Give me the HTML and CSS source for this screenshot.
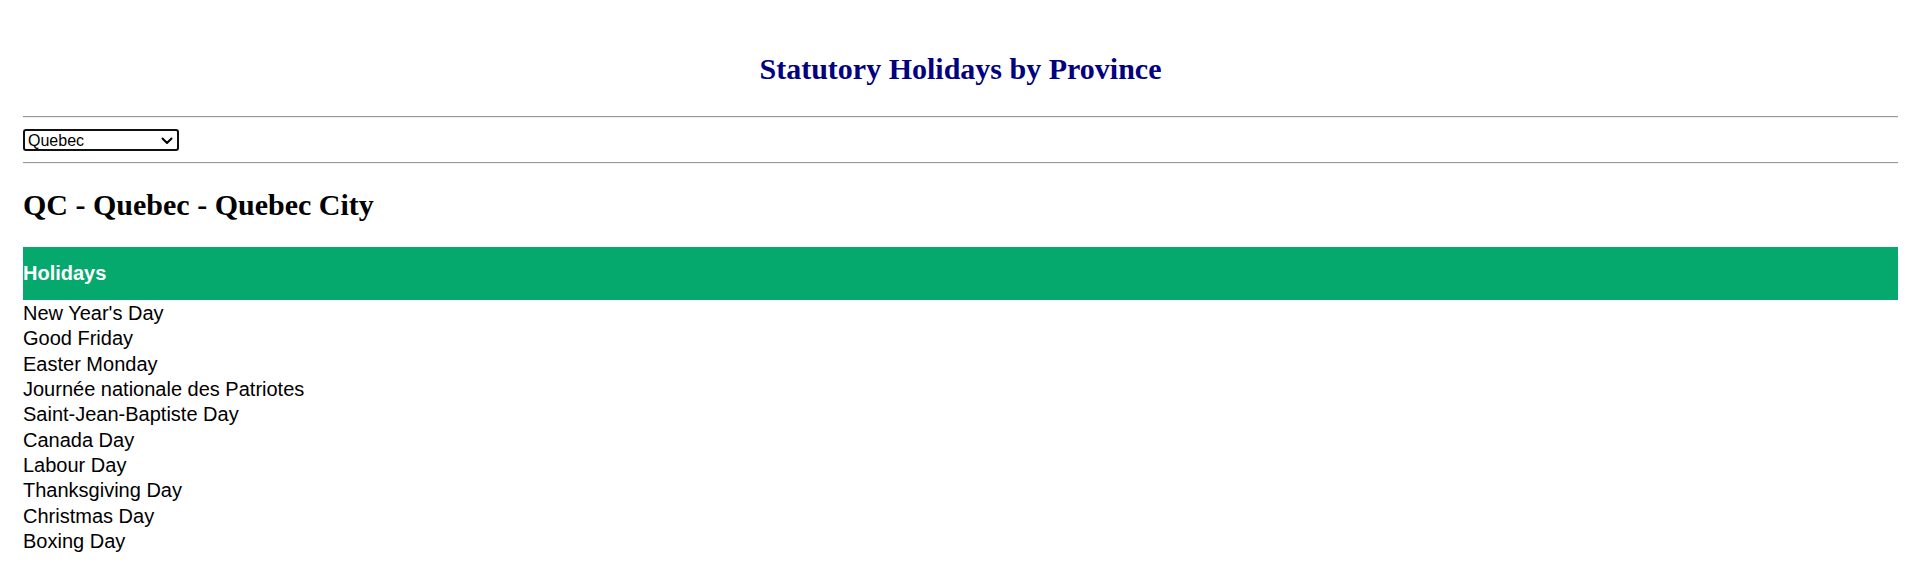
FILE: index.html
```html
<!DOCTYPE html>
<html lang="en">
<head>
<meta charset="utf-8">
<title>Statutory Holidays by Province</title>
<link rel="stylesheet" href="styles.css">
</head>
<body>
<div class="page">
  <h1 class="title">Statutory Holidays by Province</h1>
  <hr class="rule rule-top">
  <div class="picker">
    <div class="select-wrap">
      <select class="province-select">
        <option>Alberta</option>
        <option>British Columbia</option>
        <option>Manitoba</option>
        <option>New Brunswick</option>
        <option>Newfoundland and Labrador</option>
        <option>Nova Scotia</option>
        <option>Ontario</option>
        <option>Prince Edward Island</option>
        <option selected>Quebec</option>
        <option>Saskatchewan</option>
      </select>
      <svg class="chevron" width="12" height="8" viewBox="0 0 12 8" aria-hidden="true">
        <path d="M1.5 1.5 L6 6 L10.5 1.5" fill="none" stroke="#000" stroke-width="2" stroke-linecap="round" stroke-linejoin="round"/>
      </svg>
    </div>
  </div>
  <hr class="rule rule-bottom">
  <h2 class="province-name">QC - Quebec - Quebec City</h2>
  <table class="holidays">
    <thead>
      <tr><th>Holidays</th></tr>
    </thead>
    <tbody>
      <tr><td>New Year's Day</td></tr>
      <tr><td>Good Friday</td></tr>
      <tr><td>Easter Monday</td></tr>
      <tr><td>Journée nationale des Patriotes</td></tr>
      <tr><td>Saint-Jean-Baptiste Day</td></tr>
      <tr><td>Canada Day</td></tr>
      <tr><td>Labour Day</td></tr>
      <tr><td>Thanksgiving Day</td></tr>
      <tr><td>Christmas Day</td></tr>
      <tr><td>Boxing Day</td></tr>
    </tbody>
  </table>
</div>
</body>
</html>
```

FILE: styles.css
```css
html, body {
  margin: 0;
  padding: 0;
  background: #ffffff;
}

.page {
  padding: 0 22px 0 23px;
  font-family: "Liberation Serif", "Times New Roman", serif;
  color: #000;
}

.title {
  margin: 0;
  padding-top: 52px;
  font-family: "Liberation Serif", "Times New Roman", serif;
  font-size: 30px;
  line-height: 34px;
  font-weight: bold;
  color: #000080;
  text-align: center;
}

.rule {
  height: 0;
  margin: 0;
  border: 0;
  border-top: 1px solid #9a9a9a;
  border-bottom: 1px solid #eeeeee;
}

.rule-top {
  margin-top: 30px;
}

.picker {
  margin-top: 11px;
  height: 22px;
  display: flex;
}

.select-wrap {
  position: relative;
  width: 156px;
  height: 22px;
}

.province-select {
  -webkit-appearance: none;
  appearance: none;
  box-sizing: border-box;
  width: 156px;
  height: 22px;
  margin: 0;
  padding: 1px 20px 0 3px;
  font-family: "Liberation Sans", Arial, sans-serif;
  font-size: 16px;
  line-height: 17px;
  color: #000;
  background: #fff;
  border: 2px solid #101010;
  border-radius: 3px;
}

.chevron {
  position: absolute;
  right: 6px;
  top: 8px;
  pointer-events: none;
}

.rule-bottom {
  margin-top: 11px;
}

.province-name {
  margin: 24px 0 0 0;
  font-family: "Liberation Serif", "Times New Roman", serif;
  font-size: 30px;
  line-height: 34px;
  font-weight: bold;
  color: #000;
}

.holidays {
  width: 100%;
  margin-top: 25px;
  border-collapse: collapse;
  border-spacing: 0;
  font-family: "Liberation Sans", Arial, sans-serif;
  font-size: 20px;
  color: #000;
}

.holidays th {
  padding: 15px 0;
  line-height: 23px;
  background: #05a96d;
  color: #ffffff;
  font-weight: bold;
  text-align: left;
}

.holidays td {
  padding: 2px 0 0 0;
  line-height: 23.33px;
  text-align: left;
}
```
